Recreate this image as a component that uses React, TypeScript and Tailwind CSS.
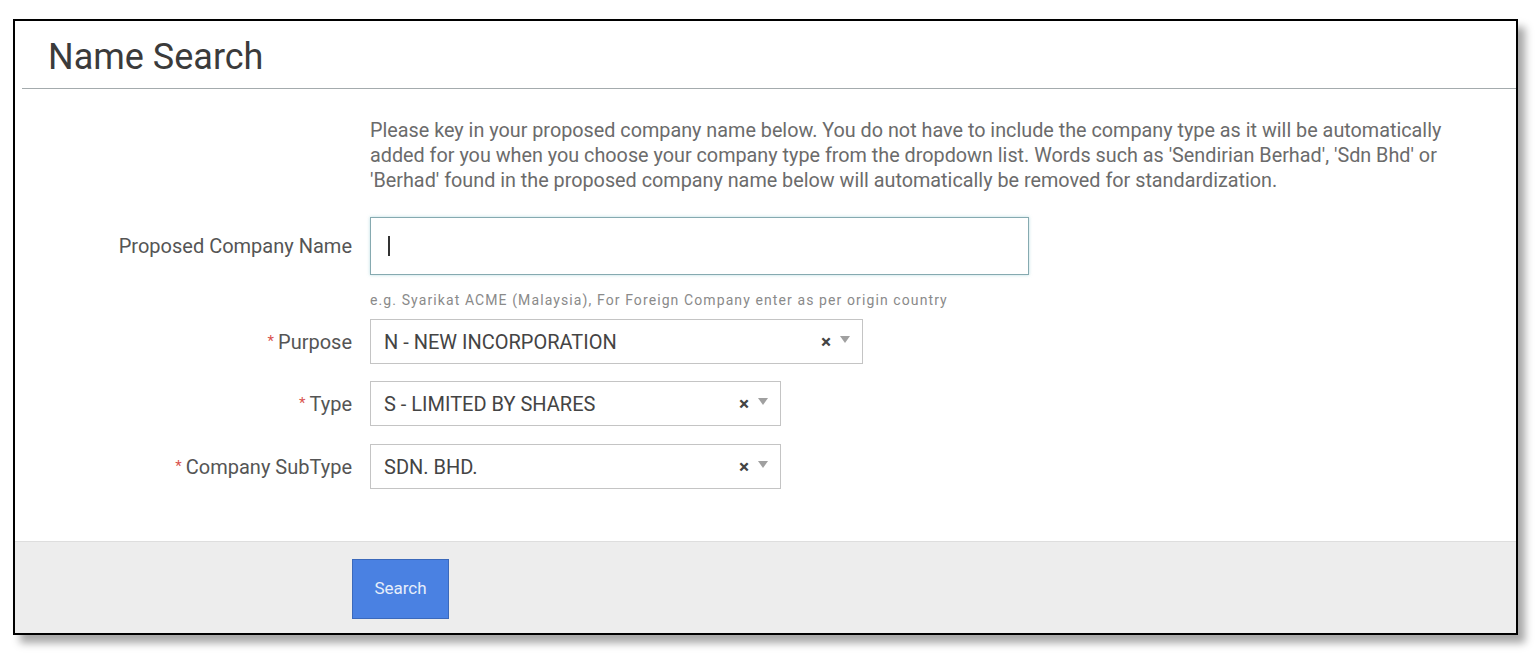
const font = { fontFamily: "Roboto, 'Liberation Sans', sans-serif" }

function Label({ text, required }: { text: string; required?: boolean }) {
  return (
    <div className="text-right text-[20px] leading-none text-[#555] whitespace-nowrap">
      {required && <span className="text-[#d9534f] text-[15px] align-[3px] mr-[4px]">*</span>}
      {text}
    </div>
  )
}

function Select({ value, width }: { value: string; width: string }) {
  return (
    <div
      className={`${width} h-[45px] border border-[#c4c4c4] bg-white flex items-center pl-[13px] pr-[12px] box-border`}
    >
      <span className="flex-1 text-[20px] text-[#444] leading-none">{value}</span>
      <span className="text-[19px] text-[#444] font-bold leading-none mr-[9px]">×</span>
      <span className="w-0 h-0 border-l-[5px] border-r-[5px] border-t-[7px] border-l-transparent border-r-transparent border-t-[#a0a0a0] mt-[-4px]" />
    </div>
  )
}

export default function App() {
  return (
    <div className="min-h-screen bg-white pt-[19px] pl-[13px]" style={font}>
      <div className="w-[1505px] border-2 border-black bg-white shadow-[7px_8px_8px_rgba(0,0,0,0.35)]">
        {/* header */}
        <div className="ml-[7px] h-[68px] border-b border-[#a4abad] flex items-center pl-[26px] pt-[4px]">
          <h1 className="text-[36px] text-[#3b3b3b] leading-none">Name Search</h1>
        </div>

        {/* body */}
        <div className="pt-[29px] pb-[52px]">
          <div className="grid grid-cols-[337px_1fr] gap-x-[18px]">
            <div />
            <p className="text-[19.8px] leading-[25px] text-[#6b6b6b] whitespace-nowrap">
              Please key in your proposed company name below. You do not have to include the company type as it will be automatically
              <br />
              added for you when you choose your company type from the dropdown list. Words such as 'Sendirian Berhad', 'Sdn Bhd' or
              <br />
              'Berhad' found in the proposed company name below will automatically be removed for standardization.
            </p>

            <div className="mt-[24px] flex items-center justify-end">
              <Label text="Proposed Company Name" />
            </div>
            <div className="mt-[24px]">
              <div className="w-[659px] h-[58px] border-[1.5px] border-[#86aab0] bg-white shadow-[0_0_3px_rgba(120,190,200,0.5)] flex items-center pl-[17px] box-border">
                <span className="w-[1.5px] h-[20px] bg-[#333]" />
              </div>
            </div>

            <div />
            <div className="mt-[15px] text-[14px] leading-[20px] tracking-[1.1px] text-[#8a8a8a] whitespace-nowrap">
              e.g. Syarikat ACME (Malaysia), For Foreign Company enter as per origin country
            </div>

            <div className="mt-[9px] flex items-center justify-end">
              <Label text="Purpose" required />
            </div>
            <div className="mt-[9px]">
              <Select value="N - NEW INCORPORATION" width="w-[493px]" />
            </div>

            <div className="mt-[17px] flex items-center justify-end">
              <Label text="Type" required />
            </div>
            <div className="mt-[17px]">
              <Select value="S - LIMITED BY SHARES" width="w-[411px]" />
            </div>

            <div className="mt-[18px] flex items-center justify-end">
              <Label text="Company SubType" required />
            </div>
            <div className="mt-[18px]">
              <Select value="SDN. BHD." width="w-[411px]" />
            </div>
          </div>
        </div>

        {/* footer */}
        <div className="h-[92px] border-t border-[#dedede] bg-[#ededed] pl-[337px] pt-[17px] box-border">
          <button className="w-[97px] h-[60px] bg-[#4a81e2] border border-[#3b69bb] text-[#e6eefa] text-[17px]">
            Search
          </button>
        </div>
      </div>
    </div>
  )
}
